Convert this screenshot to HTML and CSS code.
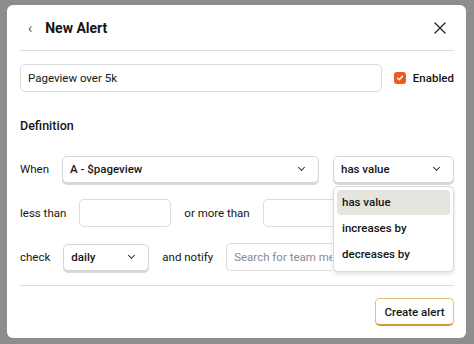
FILE: index.html
```html
<!DOCTYPE html>
<html lang="en">
<head>
    <meta charset="UTF-8">
    <meta name="viewport" content="width=device-width, initial-scale=1.0">
    <title>New Alert</title>
    <link rel="stylesheet" href="styles.css">
</head>

<body>
    <div class="modal">
        <header class="modal-header">
            <div class="title">
                <span class="back">&lsaquo;</span>
                <h1>New Alert</h1>
            </div>
            <svg class="close" width="12" height="12" viewBox="0 0 12 12">
                <path d="M1 1L11 11M11 1L1 11" stroke="#2b2b2b" stroke-width="1.4" stroke-linecap="round"/>
            </svg>
        </header>

        <div class="name-row">
            <div class="field name-field">Pageview over 5k</div>
            <label class="check">
                <span class="box">
                    <svg width="8" height="8" viewBox="0 0 8 8">
                        <path d="M1.5 4.2L3.2 5.8L6.5 2.3" stroke="#fff" stroke-width="1.4" fill="none" stroke-linecap="round" stroke-linejoin="round"/>
                    </svg>
                </span>
                Enabled
            </label>
        </div>

        <h2>Definition</h2>

        <div class="rows">
            <div class="row">
                <span class="label">When</span>
                <div class="select series">A - $pageview <span class="chev"></span></div>
                <div class="select-wrap">
                    <div class="select kind">has value <span class="chev"></span></div>
                    <div class="menu">
                        <div class="option active">has value</div>
                        <div class="option">increases by</div>
                        <div class="option">decreases by</div>
                    </div>
                </div>
            </div>
            <div class="row">
                <span class="label">less than</span>
                <div class="field num"></div>
                <span class="label mid">or more than</span>
                <div class="field num"></div>
            </div>
            <div class="row">
                <span class="label">check</span>
                <div class="select freq">daily <span class="chev"></span></div>
                <span class="label mid">and notify</span>
                <div class="field search"><span class="placeholder">Search for team members</span></div>
            </div>
        </div>

        <footer class="modal-footer">
            <button class="primary">Create alert</button>
        </footer>
    </div>
</body>
</html>
```

FILE: styles.css
```css
body {
    margin: 0;
    background-color: #8d8d8d;
    padding: 5px 8px 6px 7px;
    font-family: "Roboto", "Noto Sans", sans-serif;
    color: #151515;
    font-size: 11.5px;
}

.modal {
    background-color: #ffffff;
    border-radius: 6px;
    height: 333px;
    box-sizing: border-box;
    padding: 0 12px 0 13px;
    overflow: hidden;
}

.modal-header {
    height: 45px;
    display: flex;
    align-items: center;
    justify-content: space-between;
    border-bottom: 1px solid #dedede;
}

.title {
    display: flex;
    align-items: center;
}

.back {
    font-size: 14px;
    color: #555;
    margin: 0 13px 0 8px;
    line-height: 1;
}

.title h1 {
    font-size: 14px;
    font-weight: 700;
    margin: 0;
}

.close {
    margin-right: 8px;
}

.name-row {
    display: flex;
    align-items: center;
    gap: 12px;
    margin-top: 13px;
}

.field {
    height: 28px;
    box-sizing: border-box;
    border: 1px solid #dcdcdc;
    border-radius: 5px;
    display: flex;
    align-items: center;
    padding: 0 7px;
    background: #fff;
}

.name-field {
    flex: 1;
}

.check {
    display: flex;
    align-items: center;
    gap: 7px;
    font-weight: 500;
}

.box {
    width: 12px;
    height: 12px;
    border-radius: 3px;
    background-color: #ec5a1f;
    display: flex;
    align-items: center;
    justify-content: center;
}

h2 {
    font-size: 12.5px;
    font-weight: 500;
    margin: 26px 0 21px;
    line-height: 16px;
}

.rows {
    display: flex;
    flex-direction: column;
    gap: 16px;
}

.row {
    display: flex;
    align-items: center;
    height: 28px;
}

.label {
    margin-right: 13px;
}

.label.mid {
    margin-left: 13px;
}

.select {
    height: 27px;
    box-sizing: border-box;
    border: 1px solid #d6d6d6;
    border-radius: 5px;
    box-shadow: 0 2px 0 #d9d9d9;
    display: flex;
    align-items: center;
    justify-content: space-between;
    padding: 0 14px 0 7px;
    font-weight: 500;
    background: #fff;
}

.chev {
    width: 4px;
    height: 4px;
    border-right: 1px solid #333;
    border-bottom: 1px solid #333;
    transform: rotate(45deg);
    margin-top: -3px;
}

.series {
    width: 257px;
}

.select-wrap {
    position: relative;
    margin-left: 14px;
    flex: 1;
}

.kind {
    width: 100%;
}

.menu {
    position: absolute;
    top: 30px;
    left: 0;
    right: 0;
    background: #fff;
    border: 1px solid #dcdcdc;
    border-radius: 5px;
    box-shadow: 0 2px 4px rgba(0, 0, 0, 0.12);
    padding: 3px;
    z-index: 10;
}

.option {
    height: 25px;
    display: flex;
    align-items: center;
    padding: 0 5px;
    border-radius: 4px;
    font-weight: 500;
    margin-bottom: 1px;
}

.option.active {
    background-color: #e5e5e0;
}

.num {
    width: 92px;
}

.freq {
    width: 86px;
}

/* runs under the open menu, so stop it where the menu starts */
.search {
    flex: 1;
    min-width: 0;
    margin-right: 122px;
    color: #8a8a8a;
    white-space: nowrap;
    overflow: hidden;
    border-right: none;
    border-radius: 5px 0 0 5px;
    padding-right: 0;
}

.placeholder {
    min-width: 0;
    overflow: hidden;
}

.modal-footer {
    border-top: 1px solid #dedede;
    margin-top: 14px;
    padding-top: 12px;
    display: flex;
    justify-content: flex-end;
}

.primary {
    font-family: inherit;
    font-size: 11.5px;
    font-weight: 500;
    color: #151515;
    background: #fff;
    border: 1px solid #e2bf78;
    border-bottom: 2px solid #d19a34;
    border-radius: 5px;
    height: 28px;
    width: 79px;
    padding: 0;
}
```
